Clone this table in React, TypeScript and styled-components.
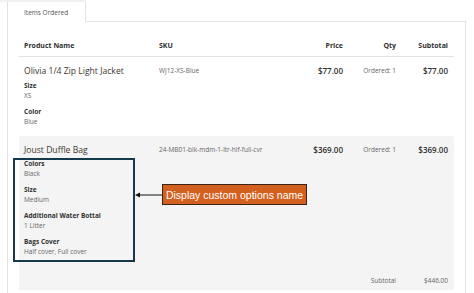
import React from "react";
import styled, { createGlobalStyle } from "styled-components";

const GlobalStyle = createGlobalStyle`
  html, body {
    margin: 0;
    padding: 0;
    background: #ffffff;
  }
  body {
    font-family: "Open Sans", "Liberation Sans", sans-serif;
    color: #303030;
    -webkit-font-smoothing: antialiased;
  }
`;

const Page = styled.div`
  width: 474px;
  height: 293px;
  overflow: hidden;
  background: #ffffff;
  position: relative;
`;

const TopStrip = styled.div`
  height: 2px;
  width: 86px;
  background: #f1f1f1;
`;

const Tab = styled.div`
  margin-left: 7px;
  width: 79px;
  height: 20px;
  border-left: 1px solid #e3e3e3;
  border-right: 1px solid #e3e3e3;
  background: #ffffff;
  display: flex;
  align-items: center;
  padding-left: 16px;
  box-sizing: border-box;
  font-size: 6.5px;
  color: #555;
  position: relative;
  z-index: 1;
  margin-bottom: -1px;
`;

const Panel = styled.div`
  margin-left: 7px;
  width: 459px;
  box-sizing: border-box;
  border: 1px solid #e3e3e3;
  border-bottom: none;
  padding: 14px 11px 0 11px;
  height: 273px;
`;

const Row = styled.div<{ $shaded?: boolean; $head?: boolean }>`
  display: grid;
  grid-template-columns: 135px 111px 83px 53px 52px;
  align-items: start;
  background: ${(p) => (p.$shaded ? "#f4f4f4" : "transparent")};
  border-bottom: ${(p) => (p.$head ? "1px solid #e1e1e1" : "none")};
  height: ${(p) => (p.$head ? "20px" : "auto")};
  align-content: ${(p) => (p.$head ? "center" : "start")};
`;

const HeadCell = styled.div<{ $right?: boolean }>`
  padding: 0 5px;
  font-size: 7px;
  font-weight: 700;
  line-height: 10px;
  color: #303030;
  text-align: ${(p) => (p.$right ? "right" : "left")};
`;

const Cell = styled.div<{ $right?: boolean; $top: number; $bottom?: number }>`
  padding: ${(p) => `${p.$top}px 5px ${p.$bottom ?? 0}px`};
  text-align: ${(p) => (p.$right ? "right" : "left")};
  position: relative;
`;

const ProductName = styled.div`
  font-size: 8.6px;
  line-height: 12px;
  color: #41362f;
  white-space: nowrap;
`;

const SmallText = styled.div`
  font-size: 6.5px;
  line-height: 12px;
  color: #666;
  white-space: nowrap;
`;

const Money = styled.div`
  font-size: 8px;
  line-height: 12px;
  font-weight: 600;
  color: #303030;
  white-space: nowrap;
`;

const Options = styled.dl<{ $lead: number }>`
  margin: ${(p) => p.$lead}px 0 0 0;
  position: relative;
`;

const OptionLabel = styled.dt`
  font-size: 6.5px;
  line-height: 10px;
  font-weight: 700;
  color: #303030;
  margin-top: 6px;
  &:first-child {
    margin-top: 0;
  }
`;

const OptionValue = styled.dd`
  margin: 0;
  font-size: 6.5px;
  line-height: 10px;
  color: #666;
  white-space: nowrap;
`;

/* annotation frame drawn over the option list */
const Highlight = styled.div`
  position: absolute;
  left: -11px;
  top: -1px;
  width: 122px;
  height: 104px;
  box-sizing: border-box;
  border: 2px solid #17384a;
  pointer-events: none;
`;

const Callout = styled.div`
  position: absolute;
  left: 162px;
  top: 184px;
  width: 145px;
  height: 21px;
  box-sizing: border-box;
  background: #d4601f;
  border: 1px solid #3b2414;
  color: #ffffff;
  font-family: "Liberation Sans", Arial, sans-serif;
  font-size: 10.5px;
  display: flex;
  align-items: center;
  justify-content: center;
  white-space: nowrap;
`;

const Pointer = styled.svg`
  position: absolute;
  left: 135px;
  top: 191px;
`;

const FootCell = styled.div<{ $right?: boolean }>`
  padding: 7px 5px 4px;
  font-size: 6.5px;
  line-height: 10px;
  color: #666;
  text-align: ${(p) => (p.$right ? "right" : "left")};
`;

type Option = { label: string; value: string };

const jacketOptions: Option[] = [
  { label: "Size", value: "XS" },
  { label: "Color", value: "Blue" },
];

const bagOptions: Option[] = [
  { label: "Colors", value: "Black" },
  { label: "Size", value: "Medium" },
  { label: "Additional Water Bottal", value: "1 Litter" },
  { label: "Bags Cover", value: "Half cover, Full cover" },
];

function OptionList({ options, lead, framed }: { options: Option[]; lead: number; framed?: boolean }) {
  return (
    <Options $lead={lead}>
      {options.map((o) => (
        <React.Fragment key={o.label}>
          <OptionLabel>{o.label}</OptionLabel>
          <OptionValue>{o.value}</OptionValue>
        </React.Fragment>
      ))}
      {framed && <Highlight />}
    </Options>
  );
}

export default function App() {
  return (
    <Page>
      <GlobalStyle />
      <TopStrip />
      <Tab>Items Ordered</Tab>
      <Panel>
        <Row $head>
          <HeadCell>Product Name</HeadCell>
          <HeadCell>SKU</HeadCell>
          <HeadCell $right>Price</HeadCell>
          <HeadCell $right>Qty</HeadCell>
          <HeadCell $right>Subtotal</HeadCell>
        </Row>

        <Row>
          <Cell $top={8} $bottom={9}>
            <ProductName>Olivia 1/4 Zip Light Jacket</ProductName>
            <OptionList options={jacketOptions} lead={4} />
          </Cell>
          <Cell $top={8}>
            <SmallText>WJ12-XS-Blue</SmallText>
          </Cell>
          <Cell $top={8} $right>
            <Money>$77.00</Money>
          </Cell>
          <Cell $top={8} $right>
            <SmallText>Ordered: 1</SmallText>
          </Cell>
          <Cell $top={8} $right>
            <Money>$77.00</Money>
          </Cell>
        </Row>

        <Row $shaded>
          <Cell $top={8} $bottom={12}>
            <ProductName>Joust Duffle Bag</ProductName>
            <OptionList options={bagOptions} lead={3} framed />
          </Cell>
          <Cell $top={8}>
            <SmallText>24-MB01-blk-mdm-1-ltr-hlf-full-cvr</SmallText>
          </Cell>
          <Cell $top={8} $right>
            <Money>$369.00</Money>
          </Cell>
          <Cell $top={8} $right>
            <SmallText>Ordered: 1</SmallText>
          </Cell>
          <Cell $top={8} $right>
            <Money>$369.00</Money>
          </Cell>
        </Row>

        <Row $shaded>
          <FootCell />
          <FootCell />
          <FootCell />
          <FootCell $right>Subtotal</FootCell>
          <FootCell $right>$446.00</FootCell>
        </Row>
      </Panel>

      <Pointer width="28" height="8" viewBox="0 0 28 8">
        <line x1="3" y1="4" x2="27" y2="4" stroke="#111" strokeWidth="1" />
        <polygon points="0,4 5,1.5 5,6.5" fill="#111" />
      </Pointer>
      <Callout>Display custom options name</Callout>
    </Page>
  );
}
